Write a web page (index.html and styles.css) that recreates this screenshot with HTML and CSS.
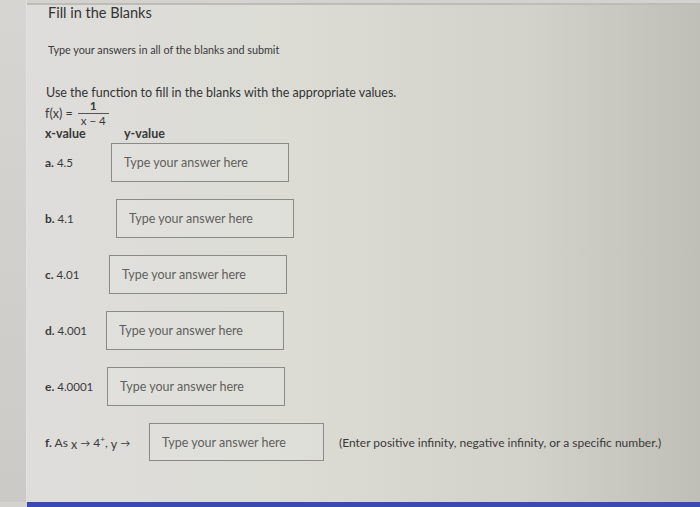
FILE: index.html
```html
<!DOCTYPE html>
<html lang="en">
<head>
<meta charset="utf-8">
<title>Fill in the Blanks</title>
<link rel="stylesheet" href="styles.css">
</head>
<body>
<div class="screen">
  <div class="gutter"></div>
  <main class="panel">
    <h1 class="title">Fill in the Blanks</h1>
    <p class="instr">Type your answers in all of the blanks and submit</p>
    <p class="prompt">Use the function to fill in the blanks with the appropriate values.</p>
    <div class="fn">
      <span class="fx">f(x) =</span>
      <span class="frac"><span class="num">1</span><span class="den">x − 4</span></span>
    </div>
    <div class="heads"><span class="head">x-value</span><span class="head head-y">y-value</span></div>
    <div class="answers">
      <label class="lbl"><b>a.</b> 4.5</label><input class="box" type="text" placeholder="Type your answer here">
      <label class="lbl"><b>b.</b> 4.1</label><input class="box box-b" type="text" placeholder="Type your answer here">
      <label class="lbl"><b>c.</b> 4.01</label><input class="box box-c" type="text" placeholder="Type your answer here">
      <label class="lbl"><b>d.</b> 4.001</label><input class="box box-d" type="text" placeholder="Type your answer here">
      <label class="lbl"><b>e.</b> 4.0001</label><input class="box box-e" type="text" placeholder="Type your answer here">
    </div>
    <div class="row-f">
      <label class="lbl lbl-f"><b>f.</b> As <span class="m">x</span> <span class="arr">→</span> 4<sup>+</sup>, <span class="m">y</span> <span class="arr">→</span></label>
      <input class="box box-f" type="text" placeholder="Type your answer here">
      <span class="hint">(Enter positive infinity, negative infinity, or a specific number.)</span>
    </div>
  </main>
</div>
<div class="bottom"></div>
</body>
</html>
```
FILE: styles.css
```css
html, body {
  margin: 0;
  padding: 0;
  width: 700px;
  height: 507px;
  overflow: hidden;
  background: #d3d2ce;
  font-family: Lato, "Liberation Sans", sans-serif;
  color: #383838;
}
.screen {
  display: flex;
  height: 502px;
}
.gutter {
  width: 26px;
  flex: none;
  background: linear-gradient(to bottom, #d6d5d1, #cbcac6);
  border-right: 1px solid #e2e1dd;
}
.panel {
  flex: 1;
  margin-top: 3px;
  border-top: 2px solid #bdbcb6;
  background: linear-gradient(to right, #dedddb 0%, #dcdcd5 40%, #d2d1ca 75%, #bfbeb7 100%);
  padding: 0 0 0 18px;
}
.title {
  margin: 0 0 0 3px;
  font-size: 14.5px;
  line-height: 16px;
  font-weight: 400;
  color: #333;
}
.instr {
  margin: 22px 0 0 3px;
  font-size: 10.8px;
  line-height: 14px;
  color: #3a3a3a;
}
.prompt {
  margin: 29px 0 0 1px;
  font-size: 12.5px;
  line-height: 14px;
  color: #333;
}
.fn {
  display: flex;
  align-items: center;
  gap: 5px;
  margin-top: 0;
  font-size: 12.5px;
  color: #3a3a3a;
}
.frac {
  display: inline-flex;
  flex-direction: column;
  align-items: center;
  width: 31px;
}
.num {
  font-weight: 700;
  font-size: 12px;
  line-height: 12px;
  border-bottom: 1px solid #555;
  width: 100%;
  text-align: center;
  padding-bottom: 1px;
}
.den {
  line-height: 13px;
  font-size: 11.5px;
}
.heads {
  display: flex;
  margin-top: -1px;
}
.head {
  font-weight: 700;
  font-size: 12.5px;
  line-height: 15px;
  width: 79px;
}
.answers {
  display: grid;
  grid-template-columns: 66px 178px;
  grid-auto-rows: 39px;
  row-gap: 17px;
  align-items: center;
  margin-top: 2px;
}
.lbl {
  font-size: 11.5px;
  color: #3a3a3a;
}
.lbl b {
  font-weight: 700;
  font-size: 12px;
}
.box {
  box-sizing: border-box;
  width: 178px;
  height: 39px;
  margin: 0;
  padding: 0 0 0 12px;
  border: 1px solid #8a8a86;
  background: rgba(230, 230, 226, 0.35);
  font-family: Lato, "Liberation Sans", sans-serif;
  font-size: 12.5px;
  color: #444;
  outline: none;
}
.box-b {
  margin-left: 5px;
}
.box-c {
  margin-left: -2px;
}
.box-d {
  margin-left: -5px;
}
.box-e {
  margin-left: -4px;
}
.box::placeholder {
  color: #5f5f5d;
  opacity: 1;
}
.row-f {
  display: flex;
  align-items: center;
  margin-top: 17px;
  height: 38px;
}
.lbl-f {
  width: 104px;
  flex: none;
  white-space: nowrap;
  font-size: 12px;
}
.m {
  font-size: 12.5px;
  position: relative;
  top: 2px;
}
.arr {
  font-size: 10px;
}
.lbl-f sup {
  font-size: 8px;
}
.box-f {
  width: 175px;
  height: 38px;
}
.hint {
  margin-left: 15px;
  font-size: 12px;
  color: #3a3a3a;
  white-space: nowrap;
}
.bottom {
  margin-left: 27px;
  height: 5px;
  background: #3a4aae;
}
```
